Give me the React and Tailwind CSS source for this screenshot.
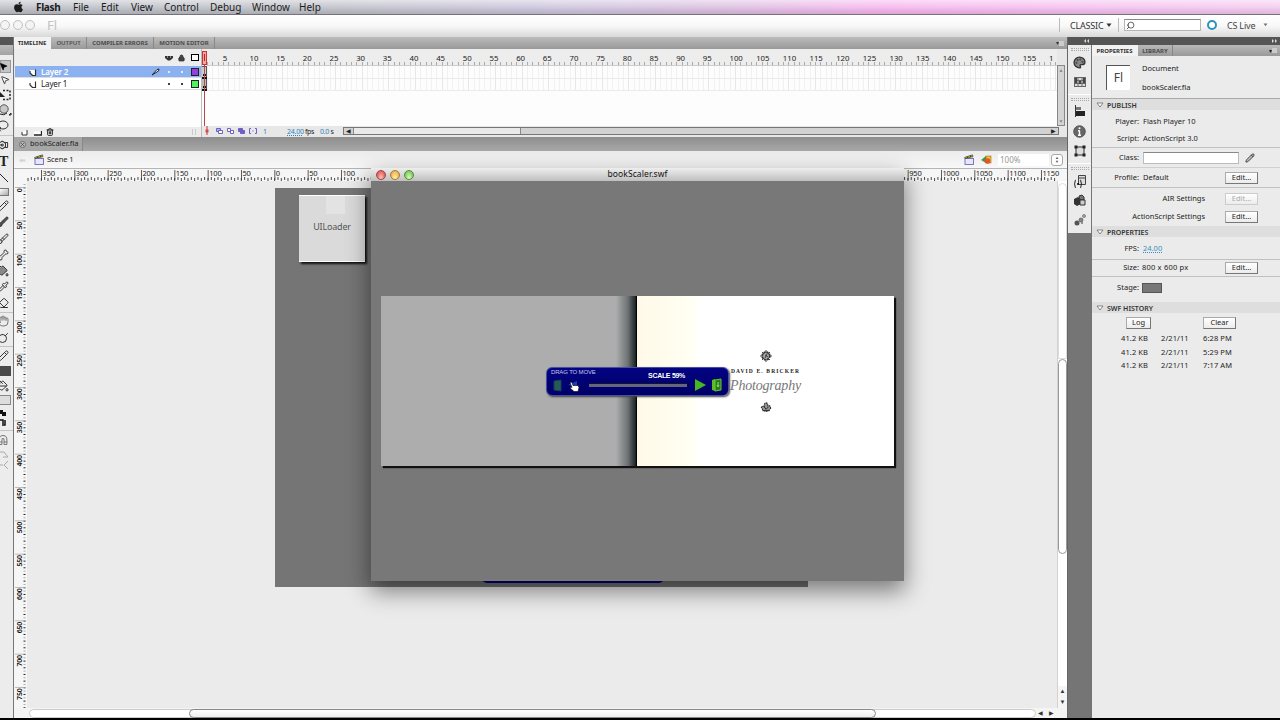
import { MousePointer2, PenTool, Hand, Search, Pencil, Brush, PaintBucket, Pipette, Eraser, Lasso, Bone, Magnet, Palette, Trash2, Lock } from 'lucide-react';
import { FaApple } from 'react-icons/fa';

const menus = [
  { label: 'File', cls: 'w-[28px]' },
  { label: 'Edit', cls: 'w-[30px]' },
  { label: 'View', cls: 'w-[33px]' },
  { label: 'Control', cls: 'w-[46px]' },
  { label: 'Debug', cls: 'w-[42px]' },
  { label: 'Window', cls: 'w-[47px]' },
  { label: 'Help', cls: 'w-[30px]' },
];

const history = ['6:28 PM', '5:29 PM', '7:17 AM'];

const range = (n) => Array.from({ length: n }, (_, i) => i);

const MenuBar = () => (
  <header className="h-[15px] shrink-0 bg-linear-to-r from-[#bfbfc4] via-[#f6b4ee] via-70% to-[#f3c9f0] text-[10px] text-[#1c1c1c]">
    <div className="h-full bg-linear-to-r from-[#bcbfc6] from-25% via-[#cdc3dd] via-45% to-transparent to-68%">
      <div className="flex h-full items-center border-b border-[#77717c] bg-linear-to-b from-white/55 via-white/15 to-black/8 pl-[13px]">
        <FaApple className="mr-[12px] h-[12px] w-[11px]" />
        <span className="w-[37px] font-bold tracking-[-0.3px]">Flash</span>
        {menus.map((m) => (
          <span key={m.label} className={`${m.cls} shrink-0`}>{m.label}</span>
        ))}
      </div>
    </div>
  </header>
);

const AppBar = () => (
  <div className="flex h-[22px] shrink-0 items-center bg-linear-to-b from-white via-[#f8f8f8] to-[#d9d9d9] pb-[2px] text-[9px] text-[#444]">
    <div className="flex gap-[2.5px]">
      {range(3).map((i) => (
        <i key={i} className="h-[10px] w-[10px] rounded-full border border-[#c0c0c0] bg-[#f4f4f4]" />
      ))}
    </div>
    <span className="ml-[12px] text-[13px] text-[#c2c2c2]">Fl</span>
    <div className="ml-auto flex h-full items-center">
      <i className="mr-[10px] h-[14px] w-px bg-[#bbb]" />
      <span className="w-[35px] text-[9px] tracking-[-0.2px] text-[#333]">CLASSIC</span>
      <svg className="ml-[1px] h-[5px] w-[6px]" viewBox="0 0 6 5"><path d="M0.5 0.5h5L3 4z" fill="#333" /></svg>
      <i className="ml-[6px] mr-[5px] h-[14px] w-px bg-[#bbb]" />
      <div className="flex h-[12px] w-[77px] items-center border border-[#b5b5b5] border-t-[#888] bg-white pl-[1px]">
        <Search className="h-[9px] w-[9px] -scale-x-100 text-[#333]" />
      </div>
      <i className="ml-[6px] h-[10px] w-[10px] rounded-full border-[2.5px] border-[#2c93ba] bg-white" />
      <span className="ml-[10px] w-[31px] tracking-[-0.2px]">CS Live</span>
      <svg className="ml-[5px] mr-[12px] h-[4px] w-[5px]" viewBox="0 0 6 5"><path d="M0.5 0.5h5L3 4z" fill="#777" /></svg>
    </div>
  </div>
);

const Ico = ({ as: C, cls = '' }) => <C className={`-ml-[3px] h-[12px] w-[12px] shrink-0 text-[#333] ${cls}`} strokeWidth={2} />;

const ToolStrip = () => (
  <aside className="flex w-[14px] shrink-0 flex-col overflow-hidden border-r border-[#777] bg-[#ececec]">
    <div className="h-[8px] shrink-0 bg-[#555]" />
    <div className="mb-[5px] h-[10px] shrink-0 bg-linear-to-b from-[#bbb] to-[#a2a2a2]" />
    <div className="flex h-[13px] w-[11px] shrink-0 items-center border border-[#999] bg-[#c4c4c4]">
      <MousePointer2 className="-ml-[2px] h-[9px] w-[9px] shrink-0 fill-black" />
    </div>
    <div className="flex h-[62px] shrink-0 flex-col justify-between pt-[2px] pb-[3px]">
      <MousePointer2 className="h-[10px] w-[10px] shrink-0 fill-white text-[#222]" />
      <svg className="h-[12px] w-[12px] shrink-0" viewBox="0 0 12 12">
        <path d="M0 3l5 5H0z" fill="#222" />
        <path d="M3 1.500h7v9H2" fill="none" stroke="#222" strokeWidth="1.500" strokeDasharray="2 1.500" />
      </svg>
      <svg className="h-[12px] w-[12px] shrink-0" viewBox="0 0 12 12">
        <circle cx="4" cy="5" r="4.200" fill="#c8c8c8" stroke="#555" />
        <path d="M0 10q4 2 7-1M11 9v2h-2z" fill="none" stroke="#222" />
      </svg>
      <Ico as={Lasso} />
    </div>
    <div className="flex h-[177px] shrink-0 flex-col justify-between border-t border-[#c4c4c4] pt-[3px] pb-[3px]">
      <Ico as={PenTool} cls="-rotate-45" />
      <span className="-ml-[1px] h-[13px] font-['Liberation_Serif',serif] text-[14px] font-bold leading-[13px] text-[#222]">T</span>
      <svg className="h-[12px] w-[12px] shrink-0" viewBox="0 0 12 12"><path d="M0 2l8 8" stroke="#222" /></svg>
      <i className="h-[8px] w-[9px] shrink-0 border border-l-0 border-[#777] bg-linear-to-br from-white to-[#aaa]" />
      <Ico as={Pencil} />
      <Ico as={Brush} cls="fill-[#555]" />
      <Ico as={Brush} />
      <Ico as={Bone} />
      <Ico as={PaintBucket} cls="fill-[#888]" />
      <Ico as={Pipette} />
      <Ico as={Eraser} />
    </div>
    <div className="flex h-[34px] shrink-0 flex-col justify-between border-t border-[#c4c4c4] py-[2px]">
      <Ico as={Hand} cls="text-[#777]" />
      <Ico as={Search} cls="-scale-x-100 -scale-y-100 rotate-90" />
    </div>
    <div className="flex h-[84px] shrink-0 flex-col justify-between border-t border-[#c4c4c4] py-[3px]">
      <Ico as={Pencil} />
      <i className="h-[10px] w-[11px] bg-[#4a4a4a]" />
      <Ico as={PaintBucket} />
      <i className="h-[10px] w-[11px] border border-l-0 border-[#888] bg-[#ddd]" />
      <svg className="h-[18px] w-[8px] shrink-0" viewBox="0 0 8 18">
        <path d="M-1 1h4v4h-4zM2 3h4v4h-4z" fill="#111" />
        <path d="M0 11h3v4M5 11v5h-3" fill="none" stroke="#111" strokeWidth="1.5" />
      </svg>
    </div>
    <div className="flex h-[44px] shrink-0 flex-col justify-between border-t border-[#c4c4c4] py-[4px]">
      <Ico as={Magnet} cls="-rotate-45 text-[#777]" />
      <svg className="h-[22px] w-[10px] shrink-0" viewBox="0 0 10 22"><path d="M0 4h4l4 5h-5M0 17h3M8 13l-4 4 4 4" fill="none" stroke="#aaa" /></svg>
    </div>
  </aside>
);

const PanelTab = ({ active, cls, children }) => (
  <span className={`${cls} flex h-full shrink-0 items-center justify-center border-r text-[6px] font-bold ${active ? 'border-transparent bg-[#f2f2f2] text-[#333]' : 'border-[#888] text-[#4c4c4c]'}`}>
    {children}
  </span>
);

const layers = [
  { name: 'Layer 2', row: 'bg-[#8cb1f1] text-white font-semibold', swatch: 'bg-[#9440e0]', dot: 'bg-white', active: true },
  { name: 'Layer 1', row: 'bg-white text-[#222]', swatch: 'bg-[#4df25c]', dot: 'bg-black' },
];

const LayerList = () => (
  <div className="flex w-[187px] shrink-0 flex-col border-r border-[#bbb]">
    <div className="flex h-[17px] shrink-0 items-center bg-[#ededed]">
      <svg className="ml-[150px] h-[6px] w-[8px]" viewBox="0 0 8 6"><path d="M0 1h8v2L5 5.500H3L0 3z" fill="#333" /><path d="M2 2h1M5 2h1" stroke="#ddd" /></svg>
      <Lock className="ml-[5px] h-[8px] w-[7px] fill-[#444] text-[#333]" strokeWidth={3} />
      <i className="ml-[6px] h-[7px] w-[8px] border-[1.5px] border-black bg-white" />
    </div>
    {layers.map((l) => (
      <div key={l.name} className={`flex h-[12px] shrink-0 items-center border-b border-[#dedede] pl-[14px] text-[8px] leading-none ${l.row}`}>
        <svg className="h-[8px] w-[8px]" viewBox="0 0 8 8">
          <path d="M1 2h5v5h-2L1 4.500z" fill="#fff" />
          <path d="M1 3v2l2.500 2.500H6.500V1.500" fill="none" stroke="#333" strokeWidth="1.200" />
        </svg>
        <span className="ml-[4px] w-[26px] whitespace-nowrap tracking-[-0.15px]">{l.name}</span>
        <span className="ml-[84px] w-[10px]">{l.active && <svg className="h-[8px] w-[9px]" viewBox="0 0 9 8"><path d="M1 7l5-5.500 2-.5-.5 2z" fill="#fff" stroke="#222" /></svg>}</span>
        <i className={`ml-[7px] h-[2px] w-[2px] rounded-full ${l.dot}`} />
        <i className={`ml-[11px] h-[2px] w-[2px] rounded-full ${l.dot}`} />
        <i className={`ml-[8px] h-[8px] w-[8px] border border-[#222] ${l.swatch}`} />
      </div>
    ))}
    <div className="flex-1 bg-[#fdfdfd]" />
    <div className="flex h-[10px] shrink-0 items-center bg-[#ececec] pl-[6px] text-[#222]">
      <svg className="h-[7px] w-[7px]" viewBox="0 0 7 7"><path d="M1 3v3h5V1" fill="#fff" stroke="#333" /></svg>
      <svg className="ml-[5px] h-[7px] w-[9px]" viewBox="0 0 9 7"><path d="M1 2.500h7V6H1z" fill="#fff" /><path d="M1 6h7.500V2" fill="none" stroke="#222" strokeWidth="1.300" /></svg>
      <Trash2 className="ml-[4px] h-[8px] w-[8px]" strokeWidth={3} />
      <span className="ml-auto mr-[5px] h-[6px] w-[4px] border-x border-[#ccc]" />
    </div>
  </div>
);

const FrameGrid = () => (
  <svg className="h-[77px] w-[855px]" viewBox="0 0 855 77" shapeRendering="crispEdges">
    <rect width="855" height="17" fill="#ededed" />
    <rect y="17" width="855" height="60" fill="#fdfdfd" />
    {range(161).map((i) => (
      <g key={i}>
        <path d={`M${i * 5.333 + 5.5} 13v3`} stroke="#aaa" />
        <path d={`M${i * 5.333 + 5.5} 17v24`} stroke={i % 5 === 4 ? '#e7e7e7' : '#f1f1f1'} />
      </g>
    ))}
    <path d="M0 29.500h855M0 41.500h855" stroke="#ebebeb" />
    <path d="M5 16.500h850" stroke="#ccc" />
    <g fontSize="7.800" fill="#222">
      {range(31).map((i) => (
        <text key={i} x={(i * 5 + 4) * 5.333 - 0.5} y="11.500">{(i + 1) * 5}</text>
      ))}
      <text x="847" y="11.500">1</text>
    </g>
    <rect x="-0.500" y="17.500" width="5" height="12" fill="#ccc" stroke="#555" />
    <rect x="-0.500" y="29.500" width="5" height="12" fill="#bbb" stroke="#555" />
    <path d="M0 29h5M0 41h5M1 38h3M1 26h3" stroke="#111" strokeWidth="2" />
    <rect x="0.500" y="2.500" width="4" height="13" fill="#f6a5a5" stroke="#cc3434" />
    <path d="M2.500 5v7" stroke="#b22" />
    <path d="M2.500 16v61" stroke="#b54750" />
  </svg>
);

const Timeline = () => (
  <section className="flex h-[100px] shrink-0 flex-col">
    <div className="flex h-[12px] shrink-0 items-stretch bg-linear-to-b from-[#bcbcbc] to-[#999]">
      <PanelTab active cls="w-[37px]">TIMELINE</PanelTab>
      <PanelTab cls="w-[36px] font-semibold">OUTPUT</PanelTab>
      <PanelTab cls="w-[67px]">COMPILER ERRORS</PanelTab>
      <PanelTab cls="w-[61px]">MOTION EDITOR</PanelTab>
      <span className="ml-auto mr-[3px] flex items-center text-[6px] text-[#333]">▾<i className="h-[5px] w-[5px] bg-[#ccc]" /></span>
    </div>
    <div className="flex flex-1 bg-[#e7e7e7] pl-px">
      <LayerList />
      <div className="flex flex-1 flex-col">
        <div className="flex h-[77px]">
          <FrameGrid />
          <div className="mt-[16px] flex w-[8px] flex-col items-center justify-between border border-[#888] bg-[#d4d4d4] text-[5px] leading-[8px] text-[#888]"><span>▲</span><span>▼</span></div>
        </div>
        <div className="flex h-[10px] items-center text-[7px] leading-none text-[#2e84bd]">
          <svg className="h-[10px] w-[63px]" viewBox="0 0 63 10">
            <path d="M5 0v9" stroke="#c33" /><path d="M3.500 3.500h3v3h-3z" fill="#d44" />
            <g fill="#fff" stroke="#6d62c4"><path d="M14.500 2.500h4v3h-4z" fill="#b5aee8" /><path d="M16.500 4.500h4v3h-4zM25.500 2.500h3v3h-3zM28.500 4.500h3v3h-3z" /><path d="M36.500 2.500h4v3h-4zM38.500 4.500h4v3h-4z" fill="#6d62c4" /><path d="M49 2.500h-1.500v5H49M53 2.500h1.500v5H53M50.500 5h1" fill="none" /></g>
          </svg>
          <span className="-ml-[2px] w-[24px]">1</span>
          <span className="w-[18px] tracking-[-0.2px] underline decoration-dotted">24.00</span>
          <span className="w-[15px] tracking-[-0.3px] text-[#222]">fps</span>
          <span className="w-[23px] whitespace-nowrap tracking-[-0.3px]">0.0<span className="text-[#222]"> s</span></span>
          <div className="flex h-[8px] w-[716px] items-center border border-[#777] bg-[#d2d2d2]">
            <span className="w-[9px] text-center text-[6px] text-[#222]">◀</span>
            <i className="h-full w-[168px] border-x border-[#888] bg-[#e9e9e9]" />
            <span className="ml-auto w-[9px] text-center text-[6px] text-[#222]">▶</span>
          </div>
        </div>
      </div>
    </div>
  </section>
);

const SceneIcon = ({ cls }) => (
  <svg className={`${cls} h-[11px] w-[10px]`} viewBox="0 0 10 11">
    <rect x="1" y="4.500" width="8.500" height="6" fill="#e6e6ff" stroke="#6f6bb8" strokeWidth=".9" />
    <path d="M.5 3.500L8.500.8l.5 2-8 1.700z" fill="#b6b824" stroke="#333" strokeWidth=".6" />
    <path d="M3 2.500l1 1.500M6 1.500l1 1.500" stroke="#222" strokeWidth=".8" />
  </svg>
);

const DocBars = () => (
  <>
    <div className="flex h-[14px] shrink-0 bg-linear-to-b from-[#8e8e8e] to-[#a8a8a8] text-[7.5px] text-[#222]">
      <div className="flex w-[69px] items-center border-r border-[#888] bg-[#a6a6a6] pl-[5px]">
        <svg className="mr-[4px] h-[7px] w-[7px]" viewBox="0 0 8 8"><circle cx="4" cy="4" r="3.500" fill="#bbb" stroke="#666" /><path d="M2.500 2.500l3 3M5.500 2.500l-3 3" stroke="#444" /></svg>
        <span>bookScaler.fla</span>
      </div>
    </div>
    <div className="flex h-[17px] shrink-0 items-center bg-linear-to-b from-[#ececec] to-[#f8f8f8] text-[7.5px] text-[#222]">
      <span className="ml-[5px] w-[15px] text-[8px] text-[#d4d4d4]">⬅</span>
      <SceneIcon cls="" />
      <span className="ml-[3px] tracking-[-0.1px]">Scene 1</span>
      <SceneIcon cls="ml-auto" />
      <svg className="ml-[7px] h-[11px] w-[11px]" viewBox="0 0 11 11"><path d="M0 6l5-4v7z" fill="#3d9b48" /><rect x="5" y="2" width="5" height="7" fill="#f4bf2d" stroke="#7b5b20" strokeWidth=".5" /><circle cx="6.500" cy="7" r="2.800" fill="#e85424" /></svg>
      <span className="ml-[6px] mr-[2px] flex h-[12px] w-[51px] items-center bg-white pl-[2px] text-[8px] text-[#999]">100%</span>
      <span className="mr-[4px] flex h-[12px] w-[12px] flex-col items-center justify-center rounded-[3px] border border-[#aaa] bg-white text-[4px] leading-[4px] text-[#555]"><span>▲</span><span>▼</span></span>
    </div>
  </>
);

// 50 document units are 33.33px on both rulers
const HRuler = () => (
  <svg className="block h-[13px] w-[1053px] shrink-0 bg-[#f6f6f6]" viewBox="0 0 1053 13">
    <path d="M0 .5h1053" stroke="#b5b5b5" />
    {range(309).map((i) => (
      <path key={i} d={`M${14 + i * 3.333} ${i % 2 ? 9 : 10}v3`} stroke="#333" strokeWidth=".9" />
    ))}
    {range(31).map((i) => (
      <g key={i}>
        <path d={`M${27.5 + i * 33.333} 2v10`} stroke="#333" strokeWidth=".8" />
        {/* labels 10-25 sit behind the movie window */}
        {(i < 10 || i > 25) && (
          <text x={28.5 + i * 33.333} y="8" fontSize="7.500" letterSpacing="-.15" fill="#222">{Math.abs(i * 50 - 350)}</text>
        )}
      </g>
    ))}
  </svg>
);

const VRuler = () => (
  <svg className="block h-[527px] w-[13px] shrink-0 bg-[#f6f6f6]" viewBox="0 0 13 527">
    {range(158).map((i) => (
      <path key={i} d={`M9.5 ${3.5 + i * 3.333}h2`} stroke={i % 2 ? '#222' : '#aaa'} strokeWidth="1" />
    ))}
    {range(16).map((i) => (
      <g key={i}>
        <path d={`M1 ${6.5 + i * 33.333}h11`} stroke="#aaa" strokeWidth=".8" />
        <text transform={`translate(7.500 ${7.5 + i * 33.333}) rotate(-90)`} textAnchor="end" fontSize="7" fontWeight="600" letterSpacing="-.2" fill="#111">{i * 50}</text>
      </g>
    ))}
  </svg>
);

const Ornament = ({ flat }) => (
  <svg className={flat ? 'h-[11px] w-[12px]' : 'h-[12px] w-[12px]'} viewBox="0 0 12 12">
    {flat ? (
      <>
        <path d="M1 6q1-2 3-1 0-4 2-4t2 3q3-1 3 3-2 3-5 3T1 6z" fill="#999" stroke="#222" strokeWidth="1.200" strokeDasharray="2 .7" />
        <path d="M2 9.500h8M4 5l2 3 3-3" stroke="#222" fill="none" />
      </>
    ) : (
      <>
        <circle cx="6" cy="6" r="3.800" fill="#aaa" stroke="#333" strokeWidth="1.800" strokeDasharray="2 1" />
        <path d="M6 0v3M6 9v3M0 6h3M9 6h3M2 2l2 2M8 8l2 2M10 2L8 4M2 10l2-2M5 5l3 2M7 4L5 8" stroke="#333" strokeWidth=".9" />
      </>
    )}
  </svg>
);

const ControlBar = () => (
  <div className="absolute left-[175px] top-[199px] h-[29px] w-[183px] rounded-[6px] border-[1.5px] border-[#4750a0] bg-linear-to-b from-[#030383] to-[#000066] px-[4px] font-['Liberation_Sans',Arial,sans-serif] text-white shadow-[1px_1px_2px_#444]">
    <div className="flex h-[11px] justify-between pt-[1px] leading-none">
      <span className="text-[6px] tracking-[-0.15px] text-[#c6c6ed]">DRAG TO MOVE</span>
      <span className="mr-[39px] pt-[3px] text-[7px] font-bold tracking-[-0.3px]">SCALE 59%</span>
    </div>
    <div className="flex h-[12px] items-center">
      <svg className="ml-[2px] h-[13px] w-[10px]" viewBox="0 0 10 13"><path d="M1 2l7-1v11l-7-1z" fill="#245c57" stroke="#163e5c" /></svg>
      <svg className="ml-[5px] mt-[3px] h-[14px] w-[14px]" viewBox="0 0 14 14">
        <path d="M0 5l9-4v6z" fill="#183fb9" />
        <path d="M2 2.500q1-1 2 0l1 3h5l1 2-1 4H6L2 8l1-1 1 .5z" fill="#fff" stroke="#111" strokeWidth=".7" />
      </svg>
      <i className="ml-[7px] h-[4px] w-[98px] border-t border-[#111132] bg-[#66667a]" />
      <svg className="ml-[8px] h-[12px] w-[12px]" viewBox="0 0 12 12"><path d="M0 0l11 6-11 6z" fill="#47b721" /></svg>
      <svg className="ml-[4px] h-[14px] w-[12px]" viewBox="0 0 12 14"><path d="M1 2l3-1v12l-3-1z" fill="#58bd23" /><path d="M4 2l6-1v11l-6 1z" fill="#277b20" stroke="#62c932" /><path d="M7 4v4M6 7l1 2 1-2" stroke="#8de35b" fill="none" /></svg>
    </div>
  </div>
);

const SwfWindow = () => (
  <div className="absolute left-[357px] top-[-13px] z-10 flex h-[413px] w-[533px] flex-col bg-[#787878] shadow-[0_9px_22px_1px_rgba(0,0,0,0.48)]">
    <div className="relative flex h-[13px] shrink-0 items-center justify-center bg-linear-to-b from-[#eee] to-[#bfbfbf] text-[8.5px] tracking-[0.1px] text-[#111]">
      <div className="absolute left-[5px] top-[1.5px] flex gap-[4px]">
        <i className="h-[10px] w-[10px] rounded-full border border-[#9c4747] bg-radial-[at_50%_85%] from-[#ffc5bd] to-[#dc3434]" />
        <i className="h-[10px] w-[10px] rounded-full border border-[#a8773b] bg-radial-[at_50%_85%] from-[#fff5a8] to-[#e8982c]" />
        <i className="h-[10px] w-[10px] rounded-full border border-[#5b8a42] bg-radial-[at_50%_85%] from-[#dcffb5] to-[#58b43c]" />
      </div>
      bookScaler.swf
    </div>
    <div className="ml-[10px] mt-[115px] flex h-[170px] w-[513px] shadow-[2px_2px_1px_#111]">
      <div className="flex w-[255px] justify-end bg-[#adadad]">
        <i className="w-[20px] bg-linear-to-r from-[#adadad] via-[#6c7273] via-60% to-[#1b2224]" />
      </div>
      <div className="flex flex-1 flex-col items-center border-l border-black bg-linear-to-r from-[#fff9e8] via-[#fffff2] via-20% to-white to-25% pt-[54px]">
        <Ornament />
        <span className="mt-[5px] whitespace-nowrap font-['Liberation_Serif',serif] text-[5.5px] font-bold leading-[8px] tracking-[1.15px] text-[#222]">DAVID E. BRICKER</span>
        <span className="mt-[2px] font-['Liberation_Serif',serif] text-[14px] italic leading-[18px] tracking-[-0.2px] text-[#777]">Photography</span>
        <div className="mt-[7px]"><Ornament flat /></div>
      </div>
    </div>
    <ControlBar />
  </div>
);

const Stage = () => (
  <div className="relative flex h-[527px] bg-[#ebebeb]">
    <VRuler />
    <div className="flex-1">
      <div className="ml-[248px] mt-[7px] flex h-[399px] w-[533px] flex-col bg-[#757575]">
        <div className="ml-[24px] mt-[7px] flex h-[67px] w-[66px] flex-col items-center border-y border-white bg-[#dadada] text-[9px] text-[#555] shadow-[2px_2px_2px_#111]">
          <i className="ml-[6px] h-[18px] w-[19px] bg-[#e3e3e3]" />
          <span className="mt-[8px] tracking-[-0.2px]">UILoader</span>
        </div>
        <i className="ml-[207px] mt-auto mb-[4px] h-[14px] w-[182px] rounded-[5px] bg-[#000080]" />
      </div>
    </div>
    <div className="flex w-[10px] flex-col border-l border-[#d2d2d2] bg-white">
      <i className="mt-[2px] h-[176px] rounded-t-full border border-[#ddd]" />
      <i className="h-[195px] rounded-full border border-[#999] bg-white" />
      <div className="mt-auto flex h-[22px] flex-col items-center bg-[#f5f5f5] text-[6px] leading-[11px] text-[#333]"><span>▲</span><span>▼</span></div>
    </div>
    <SwfWindow />
  </div>
);

const HScroll = () => (
  <div className="flex h-[10px] shrink-0 items-center bg-[#f4f4f4]">
    <div className="ml-[15px] flex h-[9px] w-[1007px] rounded-full border border-[#ccc] bg-white">
      <i className="ml-[159px] -mt-px h-[9px] w-[687px] rounded-full border border-[#888] bg-linear-to-b from-white to-[#eee]" />
    </div>
    <span className="ml-[2px] w-[11px] text-[6px] leading-none text-[#333]">◀</span>
    <span className="text-[6px] leading-none text-[#333]">▶</span>
  </div>
);

const Grip = () => <i className="mx-auto h-[3px] w-[18px] shrink-0 border-y border-dotted border-[#aaa]" />;

// pair of small triangles that collapses a panel column
const Collapse = ({ flip }) => (
  <svg className={`h-[4px] w-[5px] ${flip ? '-scale-x-100' : ''}`} viewBox="0 0 5 4"><path d="M2 0v4L0 2zM5 0v4L3 2z" fill="#ddd" /></svg>
);

const Dock = () => (
  <aside className="flex w-[25px] shrink-0 flex-col border-l border-[#666] bg-[#757575]">
    <div className="flex h-[8px] shrink-0 items-center justify-end bg-[#555] pr-[3px]"><Collapse /></div>
    <div className="mr-[1px] flex h-[188px] shrink-0 flex-col items-center bg-[#ebebeb] text-[#333]">
      <div className="flex h-[50px] w-full flex-col items-center border-b border-white pt-[3px]">
        <Grip />
        <Palette className="mt-[5px] h-[13px] w-[13px] fill-[#888]" strokeWidth={2.5} />
        <svg className="mt-[8px] h-[10px] w-[12px]" viewBox="0 0 12 10"><rect x=".5" y=".5" width="11" height="9" fill="#ddd" stroke="#666" /><path d="M4 0v10M8 0v10M0 3.500h12M0 6.500h12" stroke="#666" /><path d="M1 1h2v5H1zM5 4h2v3H5zM9 1h2v5H9z" fill="#444" /></svg>
      </div>
      <div className="flex h-[69px] w-full flex-col items-center border-b border-white pt-[3px]">
        <Grip />
        <svg className="mt-[4px] h-[12px] w-[12px]" viewBox="0 0 12 12"><path d="M1.500 0v12" stroke="#333" /><rect x="2" y="2" width="5" height="3" fill="#777" /><rect x="2" y="6" width="9" height="5" fill="#222" /></svg>
        <svg className="mt-[8px] h-[13px] w-[13px]" viewBox="0 0 13 13"><circle cx="6.500" cy="6.500" r="5.800" fill="#666" stroke="#444" strokeWidth=".8" /><path d="M6.500 5.500v5M5 5.700h1.500M5 10.200h3" stroke="#fff" strokeWidth="1.400" /><circle cx="6.500" cy="3.200" r="1" fill="#fff" /></svg>
        <svg className="mt-[7px] h-[12px] w-[12px]" viewBox="0 0 12 12"><rect x="2" y="2" width="8" height="8" fill="#ddd" stroke="#333" /><path d="M.5 .5h3v3h-3zM8.500 .5h3v3h-3zM.5 8.500h3v3h-3zM8.500 8.500h3v3h-3z" fill="#222" /></svg>
      </div>
      <div className="flex w-full flex-col items-center pt-[3px]">
        <Grip />
        <svg className="mt-[4px] h-[14px] w-[14px]" viewBox="0 0 14 14"><path d="M5.500 1.500h7v9h-7z" fill="#ddd" stroke="#444" /><path d="M6 4h6" stroke="#444" /><path d="M3 6q-1 0-1 2t-1 2q1 0 1 2t1 2M7 6q1 0 1 2t1 2q-1 0-1 2t-1 2" fill="none" stroke="#222" /><circle cx="5" cy="10" r="1" /></svg>
        <svg className="mt-[6px] h-[13px] w-[13px]" viewBox="0 0 13 13"><path d="M1 5l4-2 3 2v5l-4 2-3-2z" fill="#333" /><path d="M6 2l3-1 2 2v3H7z" fill="#777" stroke="#333" /><path d="M7 6h5v5H7z" fill="#ccc" stroke="#333" /></svg>
        <svg className="mt-[6px] h-[14px] w-[12px]" viewBox="0 0 12 14"><circle cx="3" cy="10" r="2.500" fill="#555" /><circle cx="7" cy="7" r="2" fill="#888" stroke="#444" strokeWidth=".6" /><circle cx="10" cy="3" r="1.500" fill="#aaa" stroke="#555" strokeWidth=".6" /><circle cx="8" cy="10" r="1" fill="#777" /></svg>
      </div>
    </div>
  </aside>
);

const SectionHead = ({ children }) => (
  <div className="flex h-[11px] shrink-0 items-center bg-[#dedede] pl-[4px] pt-px text-[7px] font-semibold text-[#333]">
    <svg className="mr-[3px] h-[6px] w-[8px]" viewBox="0 0 8 6"><path d="M1 1h6L4 5z" fill="#fff" stroke="#777" strokeWidth=".9" /></svg>
    {children}
  </div>
);

const Row = ({ label, cls, children }) => (
  <div className={`flex shrink-0 items-center ${cls}`}>
    <span className="w-[47px] shrink-0 text-right">{label}</span>
    <div className="ml-[4px] flex flex-1 items-center">{children}</div>
  </div>
);

const Button = ({ cls, children }) => (
  <button className={`flex h-[12px] shrink-0 items-center justify-center border border-[#aaa] border-r-[#777] border-b-[#777] bg-linear-to-b from-white to-[#ececec] text-[7.5px] leading-none ${cls}`}>{children}</button>
);

const Inspector = () => (
  <aside className="flex w-[188px] shrink-0 flex-col bg-[#ebebeb] text-[7.5px] text-[#1c1c1c]">
    <div className="flex h-[8px] shrink-0 items-center justify-end bg-[#555] pr-[3px]"><Collapse flip /></div>
    <div className="flex h-[11px] shrink-0 bg-linear-to-b from-[#b9b9b9] to-[#999]">
      <PanelTab active cls="w-[46px]">PROPERTIES</PanelTab>
      <PanelTab cls="w-[35px]">LIBRARY</PanelTab>
      <span className="ml-auto mr-[3px] flex items-center text-[6px]">▾<i className="h-[5px] w-[5px] bg-[#ccc]" /></span>
    </div>
    <div className="flex h-[43px] shrink-0 items-center border-b border-[#aaa] pl-[14px]">
      <div className="flex h-[25px] w-[24px] items-center justify-center border-l border-t border-[#555] bg-white text-[12px] text-[#444]">Fl</div>
      <div className="ml-[12px] flex h-full flex-col justify-between pb-[5px] pt-[7px] leading-[11px]">
        <span>Document</span>
        <span>bookScaler.fla</span>
      </div>
    </div>
    <SectionHead>PUBLISH</SectionHead>
    <div className="flex h-[116px] shrink-0 flex-col">
      <Row label="Player:" cls="mt-[3px] h-[18px]">Flash Player 10</Row>
      <Row label="Script:" cls="h-[17px] border-b border-[#c0c0c0]">ActionScript 3.0</Row>
      <Row label="Class:" cls="h-[20px] border-b border-[#d0d0d0]">
        <i className="h-[12px] w-[96px] border border-[#bbb] border-t-[#888] bg-white" />
        <Pencil className="ml-[6px] h-[10px] w-[10px] fill-[#bbb] text-[#333]" />
      </Row>
      <Row label="Profile:" cls="h-[20px] border-b border-[#c0c0c0]">
        <span className="w-[82px]">Default</span>
        <Button cls="w-[33px]">Edit...</Button>
      </Row>
      <div className="flex h-[22px] items-center">
        <span className="w-[113px] text-right">AIR Settings</span>
        <Button cls="ml-[20px] w-[33px] text-[#aaa] !border-[#ccc]">Edit...</Button>
      </div>
      <div className="flex h-[14px] items-center">
        <span className="w-[113px] text-right">ActionScript Settings</span>
        <Button cls="ml-[20px] w-[33px]">Edit...</Button>
      </div>
    </div>
    <SectionHead>PROPERTIES</SectionHead>
    <div className="flex h-[65px] shrink-0 flex-col">
      <Row label="FPS:" cls="h-[23px] border-b border-[#c0c0c0] pt-[2px]"><span className="text-[#3c8fbc] underline decoration-dotted">24.00</span></Row>
      <Row label="Size:" cls="h-[17px] border-b border-[#c0c0c0]">
        <span className="-ml-[1px] w-[83px] tracking-[0.2px]">800 x 600 px</span>
        <Button cls="w-[33px]">Edit...</Button>
      </Row>
      <Row label="Stage:" cls="h-[21px]"><i className="-ml-[1px] h-[10px] w-[20px] border border-[#555] bg-[#777]" /></Row>
    </div>
    <SectionHead>SWF HISTORY</SectionHead>
    <div className="mt-[4px] flex h-[13px] pl-[34px]">
      <Button cls="w-[25px]">Log</Button>
      <Button cls="ml-[52px] w-[33px]">Clear</Button>
    </div>
    <div className="mt-[2px] flex flex-col">
      {history.map((t) => (
        <div key={t} className="flex h-[13.5px] items-center pl-[29px] tracking-[0.1px]">
          <span className="w-[40px]">41.2 KB</span>
          <span className="w-[42px]">2/21/11</span>
          <span>{t}</span>
        </div>
      ))}
    </div>
  </aside>
);

const App = () => (
  <div className="flex h-[720px] w-[1280px] flex-col overflow-hidden border-b-2 border-black bg-[#ebebeb] font-['Noto_Sans','Open_Sans',sans-serif] leading-none">
    <MenuBar />
    <AppBar />
    <div className="flex min-h-0 flex-1">
      <ToolStrip />
      <main className="flex w-[1053px] shrink-0 flex-col">
        <Timeline />
        <DocBars />
        <HRuler />
        <Stage />
        <HScroll />
      </main>
      <Dock />
      <Inspector />
    </div>
  </div>
);

export default App;
